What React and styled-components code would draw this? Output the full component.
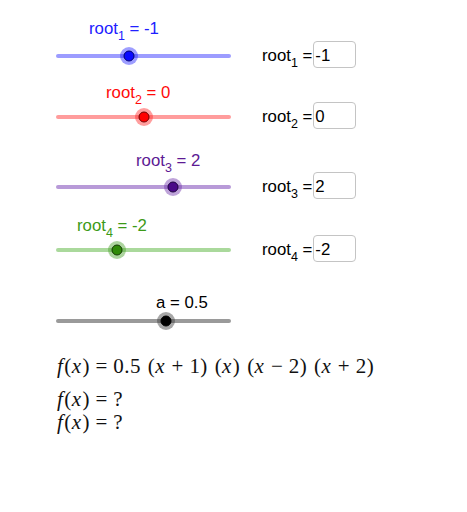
import React from 'react';
import styled, { createGlobalStyle } from 'styled-components';

const Global = createGlobalStyle`
  html, body { margin: 0; padding: 0; background: #ffffff; }
  body { font-family: "Liberation Sans", Arial, sans-serif; }
`;

const Page = styled.div`
  width: 467px;
  height: 512px;
  box-sizing: border-box;
  padding: 20px 0 0 56px;
  display: flex;
  flex-direction: column;
  overflow: hidden;
`;

const Row = styled.div`
  display: grid;
  grid-template-columns: 175px auto;
  column-gap: 31px;
  align-items: end;
  margin-top: ${p => p.$top}px;
`;

const SliderBlock = styled.div`
  display: flex;
  flex-direction: column;
  gap: ${p => p.$gap}px;
`;

const Label = styled.div`
  margin-left: ${p => p.$indent}px;
  font-size: 16.8px;
  line-height: 18px;
  color: ${p => p.$color};
  white-space: nowrap;
`;

const Sub = styled.span`
  font-size: 12.5px;
  line-height: 0;
  position: relative;
  top: 6px;
`;

const TrackArea = styled.div`
  position: relative;
  height: 16px;
  display: flex;
  align-items: center;
`;

const Track = styled.div`
  width: 100%;
  height: 4px;
  border-radius: 2px;
  background: ${p => p.$color};
`;

const Knob = styled.div`
  position: absolute;
  top: 50%;
  width: 9px;
  height: 9px;
  border-radius: 50%;
  transform: translate(-50%, -50%);
  background: ${p => p.$fill};
  border: 1px solid ${p => p.$edge};
  box-shadow: 0 0 0 3.5px ${p => p.$halo};
`;

const Field = styled.div`
  display: flex;
  align-items: center;
  margin-bottom: -4px;
  font-size: 16.8px;
  color: #000;
`;

const FieldLabel = styled.span`
  white-space: nowrap;
  margin-right: 1px;
  padding-top: 3px;
`;

const Box = styled.div`
  width: 43px;
  height: 27px;
  box-sizing: border-box;
  border: 1px solid #c4c4c4;
  border-radius: 4px;
  padding: 3px 0 0 1px;
  display: flex;
  align-items: center;
  background: #fff;
`;

const Equations = styled.div`
  margin-top: 25px;
  margin-left: 1px;
  font-family: "Liberation Serif", "Times New Roman", serif;
  font-size: 21px;
  color: #111;
`;

const EqLine = styled.div`
  line-height: 24px;
  height: 24px;
  white-space: nowrap;
  letter-spacing: 0.4px;
  margin-top: ${p => p.$top || 0}px;
`;

const I = styled.i`
  font-style: italic;
  padding-right: ${p => p.$pr || 1}px;
`;

const Op = styled.span`
  padding: 0 0.27em;
`;

const Gap = styled.span`
  display: inline-block;
  width: 0.33em;
`;

const sliders = [
  { name: 'root', sub: '1', value: '-1', color: '#2020ff', track: '#9c9cff', fill: '#0a0aff', edge: '#000070', halo: 'rgba(40,40,255,0.45)', pos: 0.418, indent: 33, top: 0, gap: 10 },
  { name: 'root', sub: '2', value: '0', color: '#ff0a0a', track: '#ff9c9c', fill: '#ff0000', edge: '#700000', halo: 'rgba(255,40,40,0.45)', pos: 0.503, indent: 50, top: 20, gap: 7 },
  { name: 'root', sub: '3', value: '2', color: '#5c1a94', track: '#b89ad8', fill: '#4a0888', edge: '#1e0040', halo: 'rgba(110,50,170,0.45)', pos: 0.669, indent: 80, top: 27, gap: 9 },
  { name: 'root', sub: '4', value: '-2', color: '#3c9a18', track: '#aad99c', fill: '#2f8a08', edge: '#123a00', halo: 'rgba(70,160,40,0.45)', pos: 0.349, indent: 21, top: 22, gap: 7 },
];

function Slider({ s, label }) {
  return (
    <SliderBlock $gap={s.gap}>
      <Label $indent={s.indent} $color={s.color}>{label}</Label>
      <TrackArea>
        <Track $color={s.track} />
        <Knob $fill={s.fill} $edge={s.edge} $halo={s.halo} style={{ left: `${s.pos * 100}%` }} />
      </TrackArea>
    </SliderBlock>
  );
}

export default function App() {
  const a = { color: '#000', track: '#9a9a9a', fill: '#000', edge: '#000', halo: 'rgba(60,60,60,0.45)', pos: 0.629, indent: 100, top: 36, gap: 1 };
  return (
    <>
      <Global />
      <Page>
        {sliders.map((s, i) => (
          <Row key={i} $top={s.top}>
            <Slider s={s} label={<>{s.name}<Sub>{s.sub}</Sub> = {s.value}</>} />
            <Field>
              <FieldLabel>{s.name}<Sub>{s.sub}</Sub> =</FieldLabel>
              <Box>{s.value}</Box>
            </Field>
          </Row>
        ))}
        <Row $top={a.top}>
          <Slider s={a} label="a = 0.5" />
          <div />
        </Row>
        <Equations>
          <EqLine>
            <I>f</I>(<I>x</I>)<Op>=</Op>0.5<Gap />(<I>x</I><Op>+</Op>1)<Gap />(<I>x</I>)<Gap />(<I>x</I><Op>−</Op>2)<Gap />(<I>x</I><Op>+</Op>2)
          </EqLine>
          <EqLine $top={9}>
            <I>f</I>(<I>x</I>)<Op>=</Op>?
          </EqLine>
          <EqLine $top={-1}>
            <I>f</I>(<I>x</I>)<Op>=</Op>?
          </EqLine>
        </Equations>
      </Page>
    </>
  );
}
